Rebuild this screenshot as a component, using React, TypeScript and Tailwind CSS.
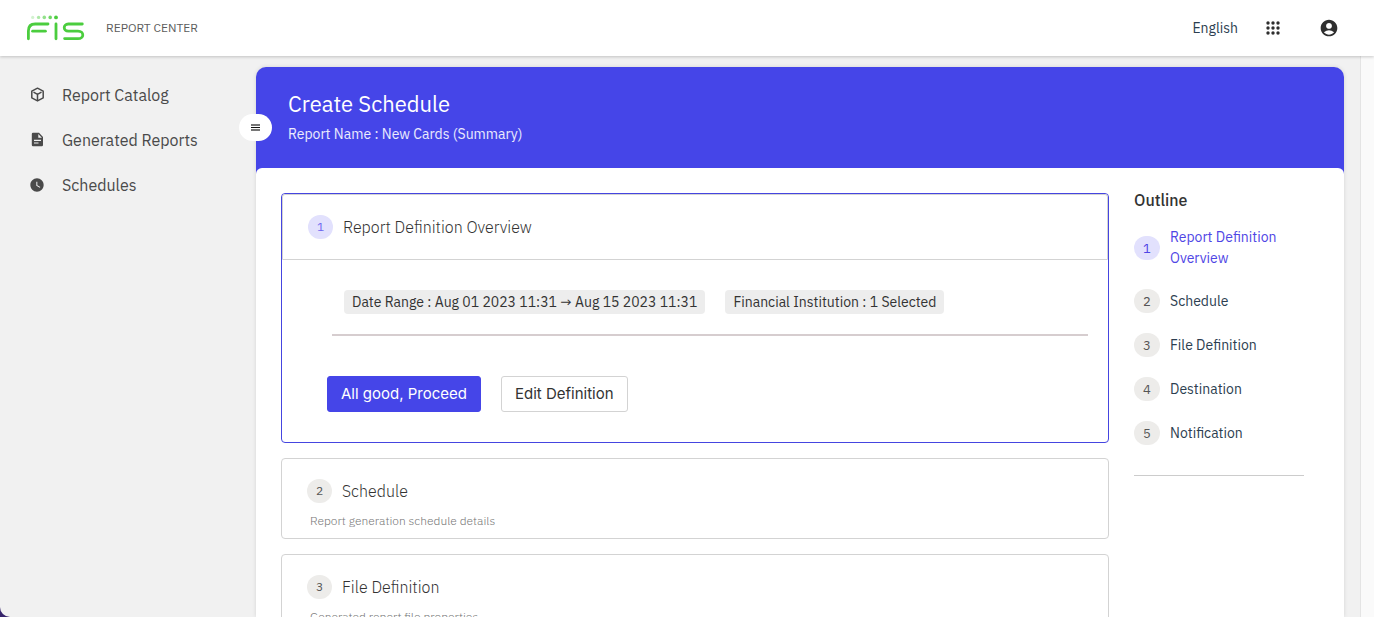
import clsx from "clsx";
import type { ReactNode } from "react";
import { MdAccountCircle, MdWatchLater } from "react-icons/md";

type Step = {
  id: number;
  title: string;
  description?: string;
};

const steps: Step[] = [
  { id: 1, title: "Report Definition Overview" },
  { id: 2, title: "Schedule", description: "Report generation schedule details" },
  { id: 3, title: "File Definition", description: "Generated report file properties" },
  { id: 4, title: "Destination" },
  { id: 5, title: "Notification" },
];

function Logo() {
  return (
    <svg width="60" height="28" viewBox="0 0 60 28" fill="none" role="img" aria-label="FIS">
      <g stroke="#4bcd3e" strokeWidth="2.8" strokeLinecap="round">
        <path d="M2.4 24.8V17C2.4 12.2 4.8 10 9.2 10H22" />
        <path d="M6.6 17.2H19.4" />
        <path d="M30 10V24.8" />
        <path d="M56.3 10H42.3C36.9 10 36.9 17.2 42.3 17.2H52C58.4 17.2 58.4 24.6 52 24.6H38.6" />
      </g>
      <g fill="#4bcd3e">
        <circle cx="6.7" cy="3.4" r="1.6" opacity="0.25" />
        <circle cx="12.6" cy="3.4" r="1.7" opacity="0.45" />
        <circle cx="18.3" cy="3.4" r="1.8" opacity="0.6" />
        <circle cx="24.2" cy="3.4" r="1.8" opacity="0.8" />
        <circle cx="30" cy="3.4" r="1.9" />
      </g>
    </svg>
  );
}

function AppsIcon() {
  const offsets = [2, 7, 12];
  return (
    <svg width="14" height="14" viewBox="0 0 14 14" fill="#2f2f2f" aria-hidden="true">
      {offsets.map((y) =>
        offsets.map((x) => <circle key={`${x}-${y}`} cx={x} cy={y} r="1.7" />),
      )}
    </svg>
  );
}

function CubeIcon() {
  return (
    <svg
      width="15"
      height="15"
      viewBox="0 0 15 15"
      fill="none"
      stroke="currentColor"
      strokeWidth="1.5"
      strokeLinejoin="round"
      aria-hidden="true"
    >
      <path d="M7.5 1.2 13.2 4.2v6.6L7.5 13.8 1.8 10.8V4.2Z" />
      <path d="M4 5.3 7.5 7.3 11 5.3M7.5 7.3V13.5" strokeLinecap="round" />
    </svg>
  );
}

function DocumentIcon() {
  return (
    <svg width="15" height="15" viewBox="0 0 15 15" aria-hidden="true">
      <path
        d="M3 .8h6L13 5v8a1.2 1.2 0 0 1-1.2 1.2H3A1.2 1.2 0 0 1 1.8 13V2A1.2 1.2 0 0 1 3 .8Z"
        fill="currentColor"
      />
      <path d="M8.3 2.1V5.7H11.9Z" fill="#f1f1f1" />
      <path d="M4 8.3H11M4 11H8.5" stroke="#f1f1f1" strokeWidth="1.2" />
    </svg>
  );
}

function NavItem({ icon, label }: { icon: ReactNode; label: string }) {
  return (
    <li>
      <a href="#" className="flex h-[45px] items-center gap-[17px] text-base text-[#4a4a4a]">
        <span className="flex w-4 justify-center">{icon}</span>
        {label}
      </a>
    </li>
  );
}

function StepBadge({ id, active, small }: { id: number; active: boolean; small?: boolean }) {
  return (
    <span
      className={clsx(
        "flex h-6 shrink-0 items-center justify-center rounded-full",
        small ? "w-[25px] text-xs" : "w-[26px] text-[13px]",
        active ? "bg-[#e2e1fd]" : "bg-[#edecea] text-[#555555]",
        active && (small ? "text-[#6f67f0]" : "text-[#4f46e5]"),
      )}
    >
      {id}
    </span>
  );
}

function StepCard({ step }: { step: Step }) {
  return (
    <section className="h-[81px] shrink-0 rounded border border-[#d3d3d3] px-[25px] pt-5">
      <div className="flex items-center gap-[10px]">
        <StepBadge id={step.id} active={false} small />
        <h2 className="text-base leading-6 font-light text-[#333333]">{step.title}</h2>
      </div>
      <p className="mt-[10px] pl-[3px] text-xs leading-4 font-light text-[#777777]">
        {step.description}
      </p>
    </section>
  );
}

function Chip({ children }: { children: ReactNode }) {
  return (
    <span className="rounded bg-[#ededed] px-2 text-sm leading-6 whitespace-nowrap text-[#333333]">
      {children}
    </span>
  );
}

export default function App() {
  const [overview, ...rest] = steps;

  return (
    <div className="h-screen bg-[#36246b] font-['IBM_Plex_Sans','Roboto',sans-serif]">
      <div className="flex h-full flex-col overflow-hidden rounded-bl-[10px] bg-[#f1f1f1]">
        <header className="relative z-10 flex h-14 shrink-0 items-center bg-white pr-[35px] pl-[26px] shadow-[0_1px_3px_rgba(0,0,0,0.2)]">
          <Logo />
          <span className="ml-5 text-xs text-[#5c5c5c]">REPORT CENTER</span>
          <div className="ml-auto flex items-center">
            <button type="button" className="text-sm text-[#2c3e50]">
              English
            </button>
            <button type="button" aria-label="Applications" className="ml-7">
              <AppsIcon />
            </button>
            <button type="button" aria-label="Account" className="ml-[39px] text-[#2f2f2f]">
              <MdAccountCircle size={20} />
            </button>
          </div>
        </header>

        <div className="flex min-h-0 flex-1">
          <aside className="w-64 shrink-0 pt-4 pl-[29px]">
            <nav>
              <ul>
                <NavItem icon={<CubeIcon />} label="Report Catalog" />
                <NavItem icon={<DocumentIcon />} label="Generated Reports" />
                <NavItem icon={<MdWatchLater size={16} />} label="Schedules" />
              </ul>
            </nav>
          </aside>

          <main className="relative flex min-w-0 flex-1 flex-col pt-[11px] pr-4">
            <button
              type="button"
              aria-label="Toggle menu"
              className="absolute top-[58px] -left-[17px] flex h-[27px] w-[33px] items-center justify-center rounded-full bg-white"
            >
              <svg width="9" height="7" viewBox="0 0 9 7" aria-hidden="true">
                <path d="M0 0h9v2H0ZM0 5h9v2H0Z" fill="#777777" />
                <path d="M0 3h9v1H0Z" fill="#111111" />
              </svg>
            </button>

            <div className="flex min-h-0 flex-1 flex-col rounded-t-[10px] bg-[#4545e8] shadow-[0_0_4px_rgba(0,0,0,0.12)]">
              <div className="h-[101px] shrink-0 px-8 pt-[22px] text-white">
                <h1 className="text-[22px] leading-[30px]">Create Schedule</h1>
                <p className="mt-1 text-sm leading-[22px] text-white/90">
                  Report Name : New Cards (Summary)
                </p>
              </div>

              <div className="flex min-h-0 flex-1 items-start gap-[25px] overflow-hidden rounded-t-[6px] bg-white pt-[25px] pr-10 pl-[25px]">
                <div className="flex min-w-0 flex-1 flex-col gap-[15px]">
                  <section className="rounded border border-[#4545e0]">
                    <div className="flex h-[66px] items-center gap-[10px] rounded-t-[3px] border border-[#d3d3d3] px-[25px]">
                      <StepBadge id={overview.id} active small />
                      <h2 className="text-base leading-6 font-light text-[#333333]">
                        {overview.title}
                      </h2>
                    </div>
                    <div className="pt-[30px] pr-5 pb-[30px] pl-[45px]">
                      <div className="ml-[5px] flex gap-5 border-b-2 border-[#d6cdcf] pb-5 pl-3">
                        <Chip>Date Range : Aug 01 2023 11:31 → Aug 15 2023 11:31</Chip>
                        <Chip>Financial Institution : 1 Selected</Chip>
                      </div>
                      <div className="mt-10 flex gap-5 font-['Inter',sans-serif]">
                        <button
                          type="button"
                          className="h-9 rounded-[3px] border border-[#4545e8] bg-[#4545e8] px-[13px] text-[15px] text-white"
                        >
                          All good, Proceed
                        </button>
                        <button
                          type="button"
                          className="h-9 rounded-[3px] border border-[#d3d3d3] bg-white px-[13px] text-[15px] text-[#333333]"
                        >
                          Edit Definition
                        </button>
                      </div>
                    </div>
                  </section>

                  {rest
                    .filter((step) => step.description)
                    .map((step) => (
                      <StepCard key={step.id} step={step} />
                    ))}
                </div>

                <aside className="w-[170px] shrink-0">
                  <h2 className="mt-[-5px] text-base leading-6 font-medium text-[#333333]">
                    Outline
                  </h2>
                  <ol className="mt-[15px] flex flex-col gap-5 border-b border-[#cccccc] pb-[30px]">
                    {steps.map((step) => (
                      <li key={step.id}>
                        <a
                          href="#"
                          className={clsx(
                            "flex items-center gap-[10px] text-sm leading-[21px]",
                            step.id === 1 ? "text-[#4f46e5]" : "text-[#2c3e50]",
                          )}
                        >
                          <StepBadge id={step.id} active={step.id === 1} />
                          {step.title}
                        </a>
                      </li>
                    ))}
                  </ol>
                </aside>
              </div>
            </div>
          </main>

          <div className="w-[14px] shrink-0 border-l border-[#e4e4e4] bg-[#fafafa]" />
        </div>
      </div>
    </div>
  );
}
